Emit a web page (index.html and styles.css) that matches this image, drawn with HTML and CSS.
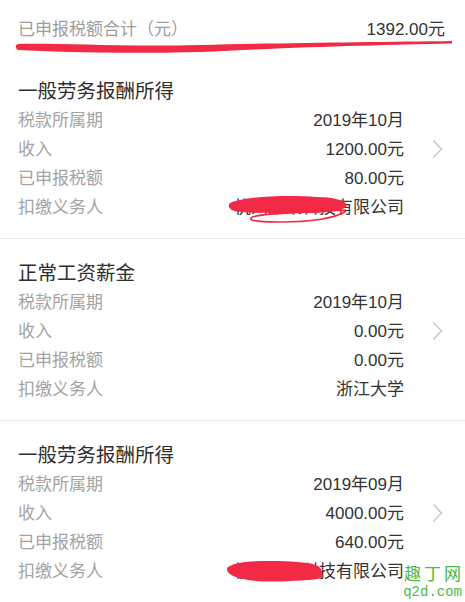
FILE: index.html
```html
<!DOCTYPE html>
<html lang="zh-CN">

<head>
    <meta charset="UTF-8">
    <meta name="viewport" content="width=device-width, initial-scale=1.0">
    <title>已申报税额</title>
    <link rel="stylesheet" href="styles.css">
</head>

<body>

    <div class="summary">
        <span class="summary-label">已申报税额合计（元）</span>
        <span class="summary-value">1392.00元</span>
        <svg class="mark-line" viewBox="0 0 465 60" width="465" height="60">
            <path d="M18,44 C60,43 120,47 200,45 C280,43 380,42 452,41 L452,43.5 C380,45 300,47 200,52 C120,54 60,52 18,50 C15,48 15,45 18,44 Z" fill="#f22a45" />
        </svg>
    </div>

    <div class="record">
        <div class="record-info">
            <div class="record-title">一般劳务报酬所得</div>
            <div class="row"><span class="label">税款所属期</span><span class="value">2019年10月</span></div>
            <div class="row"><span class="label">收入</span><span class="value">1200.00元</span></div>
            <div class="row"><span class="label">已申报税额</span><span class="value">80.00元</span></div>
            <div class="row">
                <span class="label">扣缴义务人</span>
                <span class="value company">杭州某某科技有限公司
                    <svg class="scribble scribble-a" viewBox="0 0 122 32" width="122" height="32">
                        <path d="M3,10 C18,3 60,2 90,4 C105,4 118,7 120,12 C119,18 100,20 80,20 C55,20 25,21 7,18 C1,16 1,12 3,10 Z" fill="#f22a45" />
                        <path d="M119,18 C108,26 80,29 55,29 C35,29 22,28 24,25 C27,21 60,20 119,17" fill="none" stroke="#f22a45" stroke-width="1.6" />
                    </svg>
                </span>
            </div>
        </div>
        <svg class="chevron" viewBox="0 0 11 20" width="11" height="20">
            <path d="M1.5,1.5 L9.5,10 L1.5,18.5" fill="none" stroke="#c8c8cd" stroke-width="1.5" />
        </svg>
    </div>

    <div class="record">
        <div class="record-info">
            <div class="record-title">正常工资薪金</div>
            <div class="row"><span class="label">税款所属期</span><span class="value">2019年10月</span></div>
            <div class="row"><span class="label">收入</span><span class="value">0.00元</span></div>
            <div class="row"><span class="label">已申报税额</span><span class="value">0.00元</span></div>
            <div class="row"><span class="label">扣缴义务人</span><span class="value">浙江大学</span></div>
        </div>
        <svg class="chevron" viewBox="0 0 11 20" width="11" height="20">
            <path d="M1.5,1.5 L9.5,10 L1.5,18.5" fill="none" stroke="#c8c8cd" stroke-width="1.5" />
        </svg>
    </div>

    <div class="record">
        <div class="record-info">
            <div class="record-title">一般劳务报酬所得</div>
            <div class="row"><span class="label">税款所属期</span><span class="value">2019年09月</span></div>
            <div class="row"><span class="label">收入</span><span class="value">4000.00元</span></div>
            <div class="row"><span class="label">已申报税额</span><span class="value">640.00元</span></div>
            <div class="row">
                <span class="label">扣缴义务人</span>
                <span class="value company">杭州某某科技有限公司
                    <svg class="scribble scribble-b" viewBox="0 0 118 28" width="118" height="28">
                        <path d="M6,11 C12,5 30,4 50,4 C70,4 85,5 95,8 C100,10 102,14 101,20 C99,23 85,23 70,24 C55,25 35,25 22,22 C12,20 5,16 6,11 Z" fill="#f22a45" />
                    </svg>
                </span>
            </div>
        </div>
        <svg class="chevron" viewBox="0 0 11 20" width="11" height="20">
            <path d="M1.5,1.5 L9.5,10 L1.5,18.5" fill="none" stroke="#c8c8cd" stroke-width="1.5" />
        </svg>
    </div>

    <div class="watermark">
        <span class="watermark-name">趣丁网</span>
        <span class="watermark-url">q2d.com</span>
    </div>

</body>

</html>
```

FILE: styles.css
```css
* {
    margin: 0;
    padding: 0;
    box-sizing: border-box;
}

body {
    width: 465px;
    height: 602px;
    overflow: hidden;
    position: relative;
    background: #fff;
    font-family: "Liberation Sans", "Noto Sans CJK SC", sans-serif;
    color: #333;
}

/* SUMMARY */
.summary {
    position: relative;
    height: 57px;
    padding: 15px 20px 0 18px;
    display: flex;
    justify-content: space-between;
    font-size: 17px;
    line-height: 29px;
}

.summary-label {
    color: #9d9d9d;
}

.mark-line {
    position: absolute;
    left: 0;
    top: 0;
}

/* RECORD */
.record {
    display: flex;
    align-items: center;
    padding: 19px 22px 16px 18px;
    border-top: 1px solid #e9e9e9;
}

.summary + .record {
    border-top: 0;
}

.record-info {
    flex: 1;
    margin-right: 28px;
}

.record-title {
    font-size: 19.5px;
    line-height: 30px;
    color: #2e2e2e;
}

.row {
    display: flex;
    justify-content: space-between;
    font-size: 17px;
    line-height: 29px;
}

.label {
    color: #a3a3a3;
}

.value {
    color: #333;
}

.company {
    position: relative;
}

.scribble {
    position: absolute;
    top: 0;
}

.scribble-a {
    right: 55px;
}

.scribble-b {
    right: 65px;
}

.chevron {
    display: block;
}

/* WATERMARK */
.watermark {
    position: absolute;
    right: 3px;
    bottom: 2px;
    display: flex;
    flex-direction: column;
    align-items: center;
    color: #4cb848;
}

.watermark-name {
    font-family: "Noto Sans CJK SC", sans-serif;
    font-size: 17px;
    line-height: 22px;
    letter-spacing: 3px;
    margin-right: -3px;
}

.watermark-url {
    font-family: "Liberation Mono", monospace;
    font-size: 14px;
    line-height: 16px;
}
```
